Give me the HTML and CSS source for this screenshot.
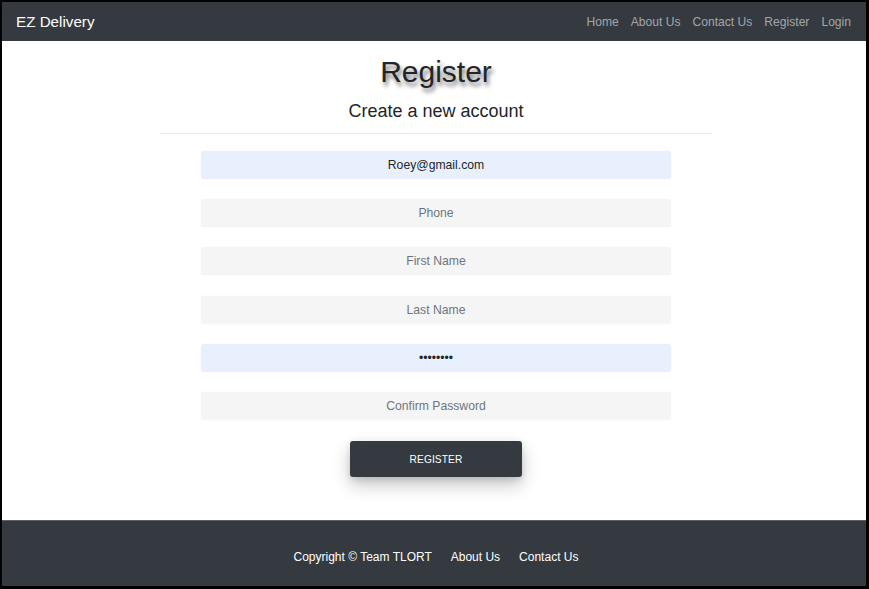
FILE: index.html
```html
<!DOCTYPE html>
<html lang="en">
<head>
<meta charset="utf-8">
<title>EZ Delivery - Register</title>
<link rel="stylesheet" href="styles.css">
</head>
<body>
<div class="frame">
  <nav class="navbar">
    <a class="brand" href="#">EZ Delivery</a>
    <ul class="nav-links">
      <li><a href="#">Home</a></li>
      <li><a href="#">About Us</a></li>
      <li><a href="#">Contact Us</a></li>
      <li><a href="#">Register</a></li>
      <li><a href="#">Login</a></li>
    </ul>
  </nav>
  <main class="main">
    <h1 class="title">Register</h1>
    <h2 class="subtitle">Create a new account</h2>
    <hr class="divider">
    <form class="form">
      <input class="field autofill" type="email" value="Roey@gmail.com" placeholder="Email">
      <input class="field" type="tel" placeholder="Phone">
      <input class="field" type="text" placeholder="First Name">
      <input class="field" type="text" placeholder="Last Name">
      <input class="field autofill" type="password" value="12345678" placeholder="Password">
      <input class="field" type="password" placeholder="Confirm Password">
      <button class="btn" type="button">REGISTER</button>
    </form>
  </main>
  <footer class="footer">
    <span>Copyright © Team TLORT</span>
    <a href="#">About Us</a>
    <a href="#">Contact Us</a>
  </footer>
</div>
</body>
</html>
```
FILE: styles.css
```css
* { box-sizing: border-box; }
html, body { margin: 0; padding: 0; }
body {
  font-family: "Liberation Sans", Arial, sans-serif;
  background: #000;
}
.frame {
  height: 589px;
  width: 869px;
  border-style: solid;
  border-color: #000;
  border-width: 2px 3px 3px 2px;
  display: flex;
  flex-direction: column;
  background: #fff;
}
.navbar {
  height: 39px;
  background: #343a40;
  display: flex;
  align-items: center;
  justify-content: space-between;
  padding: 0 9px 0 14px;
}
.brand {
  color: #fff;
  text-decoration: none;
  font-size: 15.2px;
  line-height: 20px;
}
.nav-links {
  list-style: none;
  margin: 0;
  padding: 0;
  display: flex;
}
.nav-links a {
  display: block;
  padding: 0 6px;
  color: #a3a6a9;
  text-decoration: none;
  font-size: 12.1px;
  line-height: 20px;
}
.main {
  flex: 1;
  display: flex;
  flex-direction: column;
  align-items: center;
  padding-left: 4px;
}
.title {
  margin: 13px 0 0;
  font-size: 30px;
  line-height: 36px;
  font-weight: normal;
  color: #212529;
  text-shadow: 2px 4px 4px rgba(0, 0, 0, 0.55);
}
.subtitle {
  margin: 10px 0 0;
  font-size: 18px;
  line-height: 22px;
  font-weight: normal;
  color: #212529;
}
.divider {
  width: 552px;
  margin: 11px 0 0;
  border: 0;
  border-top: 1px solid #e9e9e9;
  height: 0;
}
.form {
  margin-top: 17px;
  display: flex;
  flex-direction: column;
  align-items: center;
  gap: 20.2px;
}
.field {
  width: 470px;
  height: 28px;
  border: 0;
  border-radius: 3px;
  background: #f5f5f5;
  box-shadow: 0 0 2px rgba(0, 0, 0, 0.06);
  text-align: center;
  font-family: "Liberation Sans", Arial, sans-serif;
  font-size: 12.2px;
  color: #212529;
  padding: 0;
  outline: none;
}
.field::placeholder { color: #6c757d; }
.field.autofill { background: #e8f0fe; }
.btn {
  margin-top: 1px;
  width: 172px;
  height: 36px;
  border: 0;
  border-radius: 3px;
  background: #343a40;
  color: #fff;
  font-family: "Liberation Sans", Arial, sans-serif;
  font-size: 10.2px;
  letter-spacing: 0.1px;
  box-shadow: 0 8px 18px rgba(0, 0, 0, 0.22), 0 3px 6px rgba(0, 0, 0, 0.12);
}
.footer {
  height: 66px;
  background: #343a40;
  border-top: 1px solid #5c6168;
  display: flex;
  justify-content: center;
  gap: 19px;
  padding: 29px 0 0 4px;
  font-size: 12px;
  line-height: 14px;
  color: #fff;
}
.footer a { color: #fff; text-decoration: none; }
```
